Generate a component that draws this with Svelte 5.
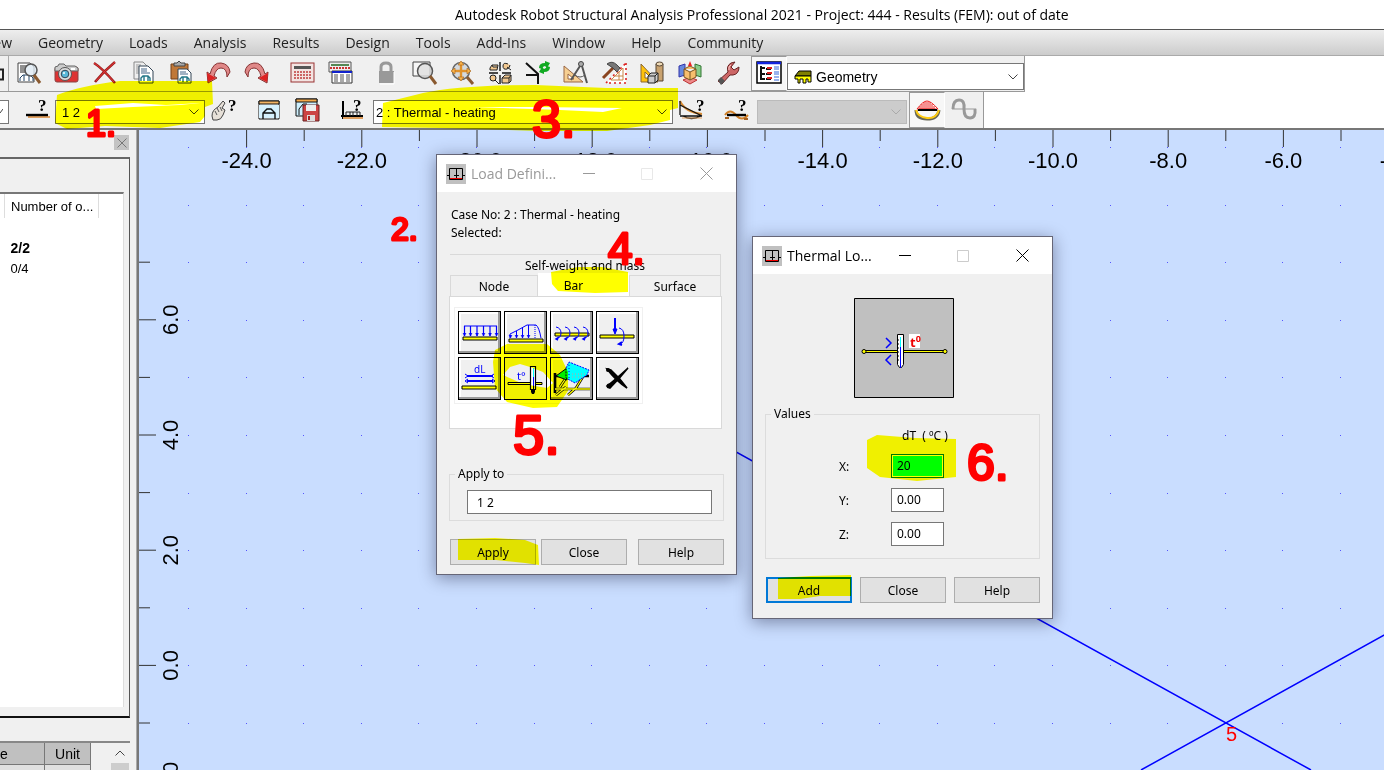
<script lang="ts">
	interface Mark {
		label: string;
		x: number;
		y: number;
		size: number;
	}

	const menus = ['Geometry', 'Loads', 'Analysis', 'Results', 'Design', 'Tools', 'Add-Ins', 'Window', 'Help', 'Community'];

	const fileTools = ['preview', 'camera', 'delete', 'copy', 'paste', 'undo', 'redo'];
	const calcTools = ['calculator', 'tables'];
	const viewTools = ['lock', 'zoom', 'pan', 'views', 'refresh', 'geometry', 'hammer', 'section', 'model', 'wrench'];
	const loadTools = ['uniform', 'trapezoid', 'moment', 'force', 'dilatation', 'thermal', 'planar', 'remove'];

	// where the question mark sits on the "select by ..." icons
	const queryX: Record<string, number> = { support: 12, hand: 17, loadcase: 14, curve: 17, buckle: 14 };

	// canvas grid, one step is one metre
	const step = 57.6;
	const originX = 50;
	const originY = 17;

	let viewWidth = $state(0);
	let viewHeight = $state(0);
	const cols = $derived(Array.from({ length: Math.max(0, Math.ceil((viewWidth - 160) / step)) }, (_, i) => i));
	const rows = $derived(Array.from({ length: Math.max(0, Math.ceil(viewHeight / step)) + 1 }, (_, i) => i));

	const marks: Mark[] = [
		{ label: '1.', x: 86, y: 136, size: 36 },
		{ label: '2.', x: 391, y: 240, size: 32 },
		{ label: '3.', x: 532, y: 137, size: 52 },
		{ label: '4.', x: 608, y: 264, size: 44 },
		{ label: '5.', x: 513, y: 454, size: 56 },
		{ label: '6.', x: 967, y: 480, size: 50 }
	];

	const highlights = [
		'M57 95 Q80 86 120 81 L212 81 L213 104 L205 107 L205 116 L200 122 L160 128 L105 126 L67 129 L55 123Z M95 106 L133 103 L166 105 L200 103 L180 105 L133 107 L96 109Z',
		'M383 103 L423 93 Q460 85 535 85 L607 88 L678 88 L678 108 L670 110 L670 120 L650 125 L607 131 L540 131 L440 128 L382 127Z M473 107 L533 107 L622 108 L603 112 L560 110 L533 109Z',
		'M551 272 L578 267 L602 267 L628 272 L628 292 L595 293 L558 291 L552 284Z',
		'M495 350 L507 344 L547 344 L560 355 L568 372 L568 391 L557 407 L533 408 L507 402 L495 388 L493 362Z M503 375 L510 367 L520 364 L530 367 L543 372 L553 383 L547 388 L523 384Z',
		'M458 539 L495 538 L525 540 L538 545 L539 565 L525 563 L496 560 L458 560Z',
		'M867 440 L877 435 L915 438 L956 439 L956 477 L917 481 L880 477 L867 468Z',
		'M778 578 L810 576 L851 575 L851 596 L820 596 L800 599 L778 599Z'
	];

	const icons: Record<string, string> = {
		preview: `<path d="M3 3h12l4 4v15H3z" fill="#fff" stroke="#444"/><path d="M5 6h8M5 8h6M5 10h6M5 12h6" stroke="#222"/><path d="M5 21v-3l3-3h7l3 3v3M9 15v6M14 15v6" fill="none" stroke="#246"/><circle cx="16" cy="10" r="6" fill="#dfeaf2" fill-opacity=".8" stroke="#555" stroke-width="1.5"/><path d="M19 15l6 8" stroke="#8a5a30" stroke-width="3"/>`,
		camera: `<rect x="2" y="7" width="23" height="15" rx="2" fill="#d33" stroke="#844"/><path d="M2 11V7l3-1 1-2h5l2 2h9l3 2v3z" fill="#ccc" stroke="#666"/><circle cx="12" cy="14" r="6.5" fill="#ddd" stroke="#555"/><circle cx="12" cy="14" r="3.8" fill="#5ab8d8" stroke="#345"/><circle cx="11" cy="13" r="1" fill="#fff"/><rect x="18" y="8" width="4" height="2" fill="#fff"/>`,
		delete: `<path d="M3 3Q11 8 24 23M24 2Q13 11 4 22" fill="none" stroke="#922" stroke-width="2.6"/><path d="M3 3Q11 8 23 22M24 2Q13 11 5 21" fill="none" stroke="#e33"/>`,
		copy: `<path d="M5 2h9l4 4v13H5z" fill="#eee" stroke="#888"/><path d="M7 5h5M7 7h8M7 9h6M7 11h8M7 13h7" stroke="#999"/><path d="M10 6h9l5 5v12H10z" fill="#fff" stroke="#345"/><path d="M12 9h6M12 11h6M12 13h9" stroke="#468"/><path d="M12 21v-3l2-2h5l2 2v3M15 16v5M19 16v5" fill="none" stroke="#278" stroke-width="1.4"/>`,
		paste: `<path d="M4 4h17v15H4z" fill="#c07838" stroke="#754018"/><path d="M7 6V3h3l2-2 2 2h4v3z" fill="#aaa" stroke="#444"/><path d="M11 9h9l4 4v10H11z" fill="#fff" stroke="#345"/><path d="M13 12h6M13 14h8" stroke="#468"/><path d="M13 21v-2l2-2h5l2 2v2M16 17v5M20 17v5" fill="none" stroke="#278" stroke-width="1.4"/>`,
		undo: `<path d="M3 23l-1-11 3 2Q8 2 16 3Q24 4 25 12L22 17Q22 8 16 8Q11 8 9 16L12 18Z" fill="#e08888" stroke="#833"/><path d="M3 22l-1-9 9 5Z" fill="#d22"/>`,
		redo: `<path d="M24 23l1-11-3 2Q19 2 11 3Q3 4 2 12L5 17Q5 8 11 8Q16 8 18 16L15 18Z" fill="#e08888" stroke="#833"/><path d="M24 22l1-9-9 5Z" fill="#d22"/>`,
		calculator: `<rect x="2" y="3" width="23" height="19" fill="#f3e4e2" stroke="#933"/><rect x="5" y="6" width="17" height="3" fill="#555"/><path d="M5 12h17M5 15h17M5 18h17" stroke="#c66" stroke-width="2" stroke-dasharray="2 1"/>`,
		tables: `<path d="M2 2h22v10H2z" fill="#eee" stroke="#555"/><path d="M4 5h18" stroke="#585" stroke-width="2"/><path d="M3 8h20" stroke="#c33" stroke-width="2" stroke-dasharray="2 1"/><path d="M5 11h20v12H5z" fill="#fff" stroke="#333"/><path d="M5 12h20" stroke="#12c" stroke-width="2"/><path d="M7 15h16M7 17h16M7 19h16M7 21h16" stroke="#555" stroke-dasharray="4 2"/>`,
		lock: `<path d="M8 12V7Q8 3 13 3T18 7V12" fill="none" stroke="#999" stroke-width="3"/><path d="M6 11h15v12H6z" fill="#999"/><path d="M21 12v12H7" fill="none" stroke="#fff"/>`,
		zoom: `<path d="M2 2h17v14H2z" fill="#f7f7f7" stroke="#444"/><circle cx="14" cy="11" r="7.5" fill="#ddd" fill-opacity=".8" stroke="#555" stroke-width="1.5"/><path d="M19 16l6 8" stroke="#8a5a30" stroke-width="3"/>`,
		pan: `<circle cx="12" cy="11" r="8.5" fill="#d4dae0" stroke="#666" stroke-width="1.5"/><path d="M12 3v16M4 11h16" stroke="#e0922c" stroke-width="2.4"/><path d="M12 1l3 4H9zM12 21l3-4H9zM2 11l4-3v6zM22 11l-4-3v6z" fill="#fbb54c" stroke="#a86010" stroke-width=".6"/><path d="M18 17l6 7" stroke="#8a5a30" stroke-width="3"/>`,
		views: `<path d="M13 2v9M13 15v9M2 13h9M15 13h9" stroke="#111" stroke-width="1.4"/><path d="M3 8l2-3h6l-1 5H3zM5 5l1 2h4" fill="#f2c890" stroke="#222"/><path d="M21 4q-5-2-5 2t4 3q3-1 3-4M20 7l4 3" fill="#f2c890" stroke="#222"/><circle cx="6" cy="18" r="3" fill="#f2c890" stroke="#222"/><path d="M8 20l4 4M15 18l3-3h6v6l-2 2h-7zM15 18h7v5M22 18l2-3" fill="#f2c890" stroke="#222"/>`,
		refresh: `<path d="M1 3l12 11v10M13 15H1" fill="none" stroke="#111" stroke-width="2"/><path d="M14 8q0-5 6-5V1l5 2-3 5-2-2q-2 0-3 3z" fill="#1a2"/><path d="M25 7q0 5-6 5v2l-5-2 3-5 2 2q2 0 3-3z" fill="#1a2"/>`,
		geometry: `<path d="M1 6v16h19z" fill="#f6cf92" stroke="#964"/><path d="M5 14v5h6z" fill="#fff" stroke="#964"/><circle cx="18" cy="4" r="2.5" fill="#aaa" stroke="#444"/><path d="M17 6L8 20M19 6l5 17" stroke="#555" stroke-width="2"/><path d="M12 15q5 4 10 0" fill="none" stroke="#555"/>`,
		hammer: `<path d="M25 3v20H5z" fill="#fff" stroke="#d22" stroke-width="1.6" stroke-dasharray="2 3"/><path d="M22 8v12H10zM18 12v8M14 16h8" fill="none" stroke="#c88848"/><path d="M2 18L13 7" stroke="#8a4420" stroke-width="3"/><path d="M6 4q5-4 10 1l3 3-3 4-4-4q-3-2-6-4z" fill="#777" stroke="#444"/>`,
		section: `<path d="M2 4v18h17z" fill="#ffc20c" stroke="#863"/><path d="M6 12v6h6z" fill="#fff" stroke="#863"/><path d="M17 4h7v17h-7z" fill="#c9a26f" stroke="#543"/><ellipse cx="20.5" cy="4" rx="3.5" ry="2" fill="#eed9b5" stroke="#543"/><path d="M9 16l3-3h7v7l-3 3H9zM9 16h7v7M16 16l3-3" fill="#ccc" stroke="#222"/>`,
		model: `<path d="M2 6l6-2v11l-6 2z" fill="#68d" stroke="#33a"/><path d="M24 6l-6-2v11l6 2z" fill="#8c8" stroke="#373"/><path d="M6 20l7-3 7 3-7 4z" fill="#e88" stroke="#b33"/><path d="M7 9l6-3 6 3v8l-6 3-6-3zM7 9l6 3 6-3M13 12v8" fill="#f7bf6d" stroke="#752"/><path d="M13 1l2 5h-4z" fill="#e22"/>`,
		wrench: `<path d="M3 21L13 12Q11 6 16 3L20 2 16 7 19 10 24 7Q24 14 18 15L15 15 7 24Z" fill="#c66" stroke="#622"/><path d="M3 20l3-3 4 4-4 4z" fill="#555"/><path d="M14 10q-1-4 2-5" stroke="#fcc" fill="none"/>`,
		layout: `<path d="M1 2h24v21H1z" fill="#fff" stroke="#000" stroke-width="1.5"/><path d="M1 3h24" stroke="#12d" stroke-width="2.5"/><path d="M5 6v13h4M5 8h4M5 14h4M10 9h5M10 14h5M10 19h5" fill="none" stroke="#111" stroke-width="2"/><path d="M11 8h5M11 13h5M11 18h5" stroke="#d22" stroke-width="2"/><path d="M18 7h5M18 9h5M18 12h5M18 14h5M18 17h5M18 20h5" stroke="#36d"/>`,
		support: `<path d="M2 20h22" stroke="#e0a060" stroke-width="2"/><path d="M0 18h22" stroke="#000" stroke-width="2.4"/>`,
		hand: `<path d="M1 19q0-6 6-9l5-6 2 2-3 5 3 2-2 5q-2 5-6 5H2z" fill="#e6e0d8" stroke="#444"/><path d="M6 11l2 4M9 10l2 4M4 14l2 4" stroke="#555"/>`,
		frame: `<path d="M3 4h20v18H3z" fill="#fff" stroke="#111"/><path d="M3 8h20v13H3z" fill="#d6f0fd"/><path d="M3 4h20v3H3z" fill="#f4b464" stroke="#111"/><path d="M7 22v-6l4-4h4l4 4v6M7 16h12" fill="none" stroke="#111" stroke-width="1.4"/>`,
		save: `<path d="M2 2h21v17H2z" fill="#cdeffd" stroke="#111"/><path d="M2 2h21v3H2z" fill="#f4aa4c" stroke="#111"/><path d="M5 18v-6l4-5h4" fill="none" stroke="#111"/><path d="M9 8h16v16H9z" fill="#c44" stroke="#622"/><path d="M12 8h10v6H12z" fill="#eee"/><path d="M13 18h8v6h-8z" fill="#ddd"/><path d="M15 19v4" stroke="#a22" stroke-width="2"/>`,
		loadcase: `<path d="M4 4v18M2 19h22" stroke="#000" stroke-width="2" fill="none"/><path d="M7 19v-4h14v4M11 15v4M14 15v4M18 15v4" fill="none" stroke="#222"/><path d="M4 21h20" stroke="#e0a060" stroke-width="2"/>`,
		curve: `<path d="M1 4q5 11 22 13" fill="none" stroke="#d98a30" stroke-width="2"/><path d="M1 4v14M1 19h22M1 8l22 11M4 19q8 5 18 0" fill="none" stroke="#111" stroke-width="1.3"/><path d="M3 21h20" stroke="#e0a060"/>`,
		buckle: `<path d="M1 18q5-7 11 0t12 0" fill="none" stroke="#d08028" stroke-width="2"/><path d="M3 18h19" stroke="#000" stroke-width="2.4"/><path d="M1 21h4M20 22h4" stroke="#a76020" stroke-width="2"/>`,
		diagram: `<path d="M2 13q0 9 11 9t12-9" fill="none" stroke="#665" stroke-width="3"/><path d="M2 13q2 7 11 8t12-8" fill="none" stroke="#fc1" stroke-width="2"/><path d="M3 12q6-8 10-8t11 8z" fill="#fff" stroke="#e22"/><path d="M6 9v3M8 7v5M10 5v7M12 5v7M14 5v7M16 5v7M18 7v5M20 9v3" stroke="#e22"/><path d="M4 13h19" stroke="#000" stroke-width="2"/>`,
		wave: `<path d="M1 12h24" stroke="#999"/><path d="M2 12Q2 3 8 3T13 12Q13 21 19 21T24 12" fill="none" stroke="#999" stroke-width="3"/>`,
		uniform: `<path d="M5 26h34v3H5z" fill="#ff0" stroke="#000"/><path d="M6 15h33M6.5 15v10M12.5 15v10M19 15v10M25.5 15v10M32 15v10M38.5 15v10" stroke="#00f" stroke-width="1.2"/><path d="M5 22l1.5 3 1.5-3M11 22l1.5 3 1.5-3M17.5 22l1.5 3 1.5-3M24 22l1.5 3 1.5-3M30.5 22l1.5 3 1.5-3M37 22l1.5 3 1.5-3" fill="#00f" stroke="#00f" stroke-width=".5"/>`,
		trapezoid: `<path d="M5 28h34v3H5z" fill="#ff0" stroke="#000"/><path d="M6 27v-4l8-4 9-5h9q3 2 5 13M12.5 20v7M18.5 17v10M24.5 14v13" fill="none" stroke="#00f"/><path d="M31 14v13" stroke="#00f" stroke-dasharray="1 1"/><path d="M5 24l1.5 3 1.5-3M11 24l1.5 3 1.5-3M17 24l1.5 3 1.5-3M23 24l1.5 3 1.5-3" stroke="#00f" fill="#00f" stroke-width=".5"/>`,
		moment: `<path d="M5 22h34v3H5z" fill="#ff0" stroke="#000"/><path d="M6 16q5 1 5 6t-5 6M15 16q5 1 5 6t-5 6M24 16q5 1 5 6t-5 6M33 16q5 1 5 6t-5 6" fill="none" stroke="#00f"/><path d="M9 26l-3 2 2 1M18 26l-3 2 2 1M27 26l-3 2 2 1M36 26l-3 2 2 1" fill="none" stroke="#00f" stroke-width="1.5"/>`,
		force: `<path d="M4 24h34v3H4z" fill="#ff0" stroke="#000"/><path d="M19 7v13" stroke="#00f" stroke-width="2"/><path d="M17 18h4l-2 5z" fill="#00f" stroke="#00f"/><path d="M23 17q5 1 5 8t-4 8" fill="none" stroke="#00f"/><path d="M26 31l-3 2 3 1" fill="none" stroke="#00f" stroke-width="2"/>`,
		dilatation: `<path d="M4 29h34v3H4z" fill="#ff0" stroke="#000"/><path d="M9 19h26M9 24h26" stroke="#00f" stroke-width="2"/><path d="M7 17l3 2-3 2M36 17l-3 2 3 2M10 22l-3 2 3 2M34 22l3 2-3 2" fill="none" stroke="#00f"/><text x="16" y="16" font-size="10" fill="#00f">dL</text>`,
		thermal: `<path d="M4 25.5h34v2H4z" fill="#ff0" stroke="#000"/><path d="M26.5 9.5h5v23h-5z" fill="#fff" stroke="#000" stroke-width="1.2"/><path d="M29.5 11v9" stroke="#0ff"/><path d="M29.5 20v12" stroke="#00f"/><path d="M27 33h4v2l-1 2h-2l-1-2z" fill="#000"/><text x="13" y="23" font-size="11" fill="#00f">t°</text>`,
		planar: `<path d="M4 32h36M5 16v20M10 30l6-9M6 38l10-8M26 31l8-13M18 38l8-7M5 19h34" stroke="#000" stroke-width="2.6"/><path d="M5 32h35M10 30l6-9M6 38l10-8M26 31l8-13M18 38l8-7" stroke="#ff0" stroke-width="1.3"/><path d="M6 19l11-8v12z" fill="#0e0" stroke="#000"/><path d="M16 11l3-6 20 8-2 5-12 8-9-5z" fill="#0ff" stroke="#00f" stroke-dasharray="2 1"/><path d="M19 8v14" stroke="#00f" stroke-dasharray="1 2"/><path d="M22 17h14M22 20h12" stroke="#c99" stroke-dasharray="1 2"/>`,
		remove: `<path d="M11 12L15 13Q24 21 31 31Q20 24 11 12Z" stroke="#000" stroke-width="1.5"/><path d="M32 11Q24 21 14 31L11 29Q20 22 32 11Z" stroke="#000" stroke-width="1.5"/><circle cx="12" cy="13" r="2"/><circle cx="13" cy="29" r="2.5"/>`
	};

	let selection = $state('1 2');
	let applyTo = $state(' 1 2');
	let tab = $state('Bar');
	let tool = $state('thermal');
	let dx = $state('20');
	let dy = $state('0.00');
	let dz = $state('0.00');
</script>

{#snippet toolButton(name: string, pressed = false)}
	<button class="tool" class:pressed aria-label={name}>
		<svg width="26" height="26" viewBox="0 0 26 26">
			{@html icons[name]}
			{#if queryX[name]}<text class="query" x={queryX[name]} y="14">?</text>{/if}
		</svg>
	</button>
{/snippet}

{#snippet chevron()}
	<svg class="chevron" width="10" height="6" viewBox="0 0 10 6"><path d="M0.5 0.5L5 5L9.5 0.5" /></svg>
{/snippet}

{#snippet titleBar(title: string)}
	<header class="title-bar">
		<svg width="20" height="20" viewBox="0 0 20 20">
			<path fill="#c0c0c0" d="M0 0h20v20H0z" />
			<path fill="none" stroke="#000" d="M3.5 4.5h13v11h-13zM10.5 4v11M1 11.5h3M8 11.5h5M16 11.5h3" />
			<path stroke="#e00" d="M4 14.5h12" />
		</svg>
		<h2>{title}</h2>
		<div class="window-buttons">
			<button aria-label="Minimize"><svg width="12" height="12"><path d="M0 5.5h12" /></svg></button>
			<button aria-label="Maximize" disabled><svg width="12" height="12"><path d="M0.5 0.5h11v11h-11z" /></svg></button>
			<button aria-label="Close window"><svg width="13" height="13"><path d="M0.5 0.5l12 12M12.5 0.5l-12 12" /></svg></button>
		</div>
	</header>
{/snippet}

<div class="app">
	<h1>Autodesk Robot Structural Analysis Professional 2021 - Project: 444 - Results (FEM): out of date</h1>

	<nav class="menu">
		<button>ew</button>
		{#each menus as menu}
			<button>{menu}</button>
		{/each}
	</nav>

	<div class="toolbar main-bar">
		<div class="group">
			<button class="stub" aria-label="Print"><svg width="4" height="16"><path d="M0 3.5h3v10h-3" /></svg></button>
			{#each fileTools as name}{@render toolButton(name)}{/each}
		</div>
		<div class="group">
			{#each calcTools as name}{@render toolButton(name)}{/each}
		</div>
		<div class="group">
			{#each viewTools as name}{@render toolButton(name)}{/each}
		</div>
		<div class="group layout-group">
			{@render toolButton('layout', true)}
			<div class="combo layout-combo">
				<svg width="18" height="14" viewBox="0 0 18 14">
					<path d="M1 6l4-5h12v5z" fill="#808000" stroke="#000" />
					<path d="M1 6h16v6h-3V9h-2v4H9V9H6v4H4V9H1z" fill="#ff0" stroke="#000" />
				</svg>
				<select aria-label="Layout"><option>Geometry</option></select>
				{@render chevron()}
			</div>
		</div>
	</div>

	<div class="toolbar select-bar">
		<div class="combo combo-stub"><svg width="3" height="6"><path d="M0 4L3 0" /></svg></div>
		{@render toolButton('support')}
		<div class="combo bar-combo">
			<select aria-label="Bar selection" bind:value={selection}><option>1 2</option></select>
			{@render chevron()}
		</div>
		{@render toolButton('hand')}
		<div class="group">
			{@render toolButton('frame')}
			{@render toolButton('save')}
		</div>
		<div class="group">{@render toolButton('loadcase')}</div>
		<div class="combo case-combo">
			<select aria-label="Load case"><option>2 : Thermal - heating</option></select>
			{@render chevron()}
		</div>
		{@render toolButton('curve')}
		<div class="group">{@render toolButton('buckle')}</div>
		<div class="combo mode-combo">
			<select aria-label="Mode" disabled><option></option></select>
			{@render chevron()}
		</div>
		{@render toolButton('diagram', true)}
		{@render toolButton('wave')}
	</div>

	<main class="workspace" bind:clientWidth={viewWidth} bind:clientHeight={viewHeight}>
		<aside>
			<div class="panel-head">
				<button class="panel-close" aria-label="Close panel">
					<svg width="10" height="10"><path d="M0.5 0.5l9 9M9.5 0.5l-9 9" /></svg>
				</button>
			</div>
			<div class="inspector">
				<div class="object-list">
					<table>
						<thead><tr><th>Number of o...</th></tr></thead>
						<tbody>
							<tr class="total"><td>2/2</td></tr>
							<tr><td>0/4</td></tr>
						</tbody>
					</table>
				</div>
			</div>
			<div class="properties">
				<table>
					<thead><tr><th class="name">e</th><th class="unit">Unit</th></tr></thead>
					<tbody><tr><td></td><td></td></tr></tbody>
				</table>
				<div class="scrollbar">
					<svg width="10" height="6"><path d="M0.5 5.5L5 1L9.5 5.5" /></svg>
					<div class="thumb"></div>
				</div>
			</div>
		</aside>

		<svg class="canvas" width="100%" height="100%">
			{#each cols as col}
				{@const x = originX + col * step}
				{#each rows as row}
					<rect class="dot" x={Math.round(x - 1)} y={Math.round(originY + row * step)} width="1" height="1" />
				{/each}
				{#if col > 0}
					<line x1={x} x2={x} y1="0" y2={col % 2 ? 17 : 11} />
				{/if}
				{#if col % 2}
					<text class="axis" {x} y="38">{(col - 25).toFixed(1)}</text>
				{/if}
			{/each}
			{#each rows.slice(2) as row}
				{@const y = originY + row * step}
				<line x1="0" x2={row % 2 ? 17 : 11} y1={y} y2={y} />
				{#if row % 2}
					<text class="axis" transform="translate(39 {y}) rotate(-90)">{(9 - row).toFixed(1)}</text>
				{/if}
			{/each}
			<path class="bar" d="M400 213L1172 640M1002 640L1420 408" />
			<text class="node" x="1087" y="611">5</text>
		</svg>
	</main>

	<section class="dialog load-dialog">
		{@render titleBar('Load Defini...')}
		<div class="dialog-body">
			<p>Case No: 2 : Thermal - heating</p>
			<p>Selected:</p>

			<div class="tabs" role="tablist">
				<button class="mass" role="tab" aria-selected={tab === 'Mass'} onclick={() => (tab = 'Mass')}>Self-weight and mass</button>
				{#each ['Node', 'Bar', 'Surface'] as name}
					<button role="tab" class:active={tab === name} aria-selected={tab === name} onclick={() => (tab = name)}>{name}</button>
				{/each}
			</div>
			<div class="tab-page">
				<div class="load-tools">
					{#each loadTools as name}
						<button class="load" class:chosen={tool === name} aria-label={name} onclick={() => (tool = name)}>
							<svg width="43" height="43" viewBox="0 0 43 43">{@html icons[name]}</svg>
						</button>
					{/each}
				</div>
			</div>

			<fieldset class="apply-to">
				<legend>Apply to</legend>
				<input aria-label="Apply to" bind:value={applyTo} />
			</fieldset>

			<div class="actions">
				<button>Apply</button>
				<button>Close</button>
				<button>Help</button>
			</div>
		</div>
	</section>

	<section class="dialog thermal-dialog">
		{@render titleBar('Thermal Lo...')}
		<div class="dialog-body">
			<svg class="picture" width="100" height="100" viewBox="0 0 100 100">
				<path d="M0.5 0.5h99v99h-99z" fill="#c0c0c0" stroke="#000" />
				<path d="M10 52.5h81v2h-81z" fill="#ff0" stroke="#000" />
				<circle cx="10" cy="53.5" r="2" fill="#ff0" stroke="#000" />
				<circle cx="91" cy="53.5" r="2" fill="#ff0" stroke="#000" />
				<path d="M43.5 36.5h6v30l-2 3h-2l-2-3z" fill="#fff" stroke="#000" />
				<path d="M44 42h1M44 46h1M44 50h1M44 54h1M44 58h1M44 62h1" stroke="#000" />
				<path d="M46.5 39v10" stroke="#0ff" />
				<path d="M46.5 49v21" stroke="#00f" />
				<path d="M32 40l5 5-5 5M37 57l-5 5 5 5" fill="none" stroke="#00f" stroke-width="1.5" />
				<path d="M55 36h11v14H55z" fill="#fff" />
				<text x="56" y="49">t<tspan class="degree" dy="-5">0</tspan></text>
			</svg>

			<fieldset class="values">
				<legend>Values</legend>
				<span class="unit-label">dT&nbsp; ( ºC )</span>
				<label for="dx">X:</label>
				<input id="dx" class="current" bind:value={dx} />
				<label for="dy">Y:</label>
				<input id="dy" bind:value={dy} />
				<label for="dz">Z:</label>
				<input id="dz" bind:value={dz} />
			</fieldset>

			<div class="actions">
				<button class="default">Add</button>
				<button>Close</button>
				<button>Help</button>
			</div>
		</div>
	</section>

	<svg class="overlay highlighter" aria-hidden="true">
		{#each highlights as d}
			<path {d} />
		{/each}
	</svg>
	<svg class="overlay steps">
		{#each marks as mark}
			<text x={mark.x} y={mark.y} font-size={mark.size}>{mark.label}</text>
		{/each}
	</svg>
</div>

<style>
	:global(body) {
		margin: 0;
		background: #fff;
	}

	.app {
		--ui: 'Open Sans', 'Noto Sans', sans-serif;
		--dialog: 'Noto Sans', sans-serif;
		--arial: 'Liberation Sans', sans-serif;
		position: relative;
		display: flex;
		flex-direction: column;
		height: 100vh;
		overflow: hidden;
		font-family: var(--ui);
		color: #000;
	}

	button,
	input,
	select {
		box-sizing: border-box;
		margin: 0;
		padding: 0;
		border: 0;
		background: none;
		font: inherit;
		color: inherit;
	}

	svg {
		display: block;
	}

	h1 {
		margin: 0;
		padding-left: 455px;
		font-size: 14px;
		font-weight: 400;
		line-height: 29px;
		white-space: nowrap;
	}

	.menu {
		display: flex;
		gap: 26px;
		box-sizing: border-box;
		height: 27px;
		flex: none;
		border-top: 1px solid #555;
		border-bottom: 1px solid #aaa;
		background: linear-gradient(#eee, #ccc);
		font-size: 14px;
		color: #222;
	}

	.menu button:first-child {
		width: 12px;
		direction: rtl;
	}

	.toolbar {
		display: flex;
		align-items: flex-end;
		box-sizing: border-box;
		height: 36px;
		flex: none;
		background: #f0f0f0;
	}

	.main-bar {
		align-self: flex-start;
		gap: 8px;
		border-right: 1px solid #999;
		border-bottom: 1px solid #999;
	}

	.select-bar {
		align-self: flex-start;
		border-right: 1px solid #999;
	}

	.group {
		display: flex;
		align-self: stretch;
		align-items: flex-end;
	}

	.layout-group {
		margin-left: -4px;
	}

	.select-bar .group {
		margin-left: 7px;
	}

	.tool {
		display: flex;
		align-items: center;
		justify-content: center;
		align-self: stretch;
		width: 38px;
		padding-bottom: 1px;
	}

	.tool svg {
		overflow: visible;
	}

	.combo-stub + .tool {
		width: 32px;
		margin-left: 14px;
	}

	.tool.pressed {
		width: 36px;
		border: 1px solid #999;
		border-right-color: #fff;
		background: #f7f7f7;
	}

	.query {
		font-family: 'Liberation Serif', serif;
		font-size: 17px;
		font-weight: 700;
	}

	.stub {
		width: 9px;
		height: 35px;
		border-right: 1px solid #aaa;
	}

	.stub path {
		fill: none;
		stroke: #222;
		stroke-width: 2;
	}

	.combo {
		display: flex;
		align-items: center;
		box-sizing: border-box;
		height: 24px;
		margin-bottom: 4px;
		padding-right: 5px;
		border: 1px solid #777;
		background: #fff;
		font-family: var(--arial);
		font-size: 13px;
	}

	.combo select {
		flex: 1;
		min-width: 0;
		height: 100%;
		padding-left: 6px;
		appearance: none;
	}

	.case-combo select {
		padding-left: 2px;
	}

	.chevron path,
	.combo-stub path,
	.scrollbar path {
		fill: none;
		stroke: #444;
	}

	.combo-stub {
		width: 9px;
		border-left: 0;
	}

	.layout-combo {
		width: 237px;
		height: 27px;
		margin-bottom: 1px;
		padding-left: 6px;
	}

	.layout-combo select {
		padding-left: 4px;
		font-size: 14px;
	}

	.bar-combo {
		width: 150px;
	}

	.case-combo {
		width: 300px;
		margin-left: 2px;
	}

	.mode-combo {
		width: 150px;
		margin: 0 2px 4px 1px;
		border-color: #bbb;
		background: #ccc;
	}

	.mode-combo path {
		stroke: #aaa;
	}

	.workspace {
		display: flex;
		flex: 1;
		min-height: 0;
		border-top: 2px solid #777;
	}

	aside {
		display: flex;
		flex-direction: column;
		box-sizing: border-box;
		width: 137px;
		flex: none;
		padding-right: 6px;
		border-right: 1px solid #aaa;
		background: #f0f0f0;
		font-family: var(--arial);
		font-size: 14px;
	}

	.panel-head {
		display: flex;
		justify-content: flex-end;
		box-sizing: border-box;
		height: 27px;
		padding: 5px 1px 0 0;
	}

	.panel-close {
		display: grid;
		place-items: center;
		width: 15px;
		height: 15px;
		background: #c3c3c3;
	}

	.panel-close path {
		stroke: #777;
	}

	.inspector {
		display: flex;
		flex: 1;
		padding: 33px 5px 9px 0;
		border-top: 2px solid #666;
		border-right: 1px solid #555;
		border-bottom: 2px solid #111;
	}

	.object-list {
		flex: 1;
		border-top: 2px solid #777;
		border-right: 1px solid #ddd;
		background: #fff;
	}

	.object-list table {
		margin-left: 4px;
		border-collapse: collapse;
	}

	.object-list th {
		width: 87px;
		height: 24px;
		padding: 0 0 0 6px;
		border: solid #ddd;
		border-width: 0 1px;
		font-size: 13px;
		font-weight: 400;
		text-align: left;
		white-space: nowrap;
	}

	.object-list td {
		height: 20px;
		padding: 0 0 0 6px;
		font-size: 13px;
	}

	.object-list .total td {
		padding-top: 20px;
		font-size: 14px;
		font-weight: 700;
	}

	.properties {
		display: flex;
		height: 27px;
		margin-top: 23px;
		border-top: 2px solid #888;
		overflow: hidden;
	}

	.properties table {
		width: 91px;
		border-collapse: collapse;
		background: #e0e0e0;
	}

	.properties th,
	.properties td {
		height: 21px;
		padding: 0;
		border-right: 1px solid #777;
		border-bottom: 1px solid #777;
		font-weight: 400;
	}

	.properties th {
		background: #c0c0c0;
	}

	.properties .name {
		width: 44px;
		text-align: left;
	}

	.scrollbar {
		display: flex;
		flex-direction: column;
		align-items: center;
		width: 20px;
		margin-left: auto;
		padding-top: 7px;
	}

	.thumb {
		width: 18px;
		flex: 1;
		margin-top: 7px;
		background: #cdcdcd;
	}

	.canvas {
		flex: 1;
		min-width: 0;
		border-left: 2px solid #777;
		background: #c9ddff;
	}

	.canvas line {
		stroke: #333;
	}

	.dot {
		fill: #55f;
	}

	.axis {
		font-family: var(--arial);
		font-size: 22px;
		text-anchor: middle;
	}

	.bar {
		fill: none;
		stroke: #00f;
		stroke-width: 1.5;
	}

	.node {
		font-family: var(--arial);
		font-size: 20px;
		fill: #f00;
	}

	.dialog {
		position: absolute;
		box-sizing: border-box;
		width: 301px;
		border: 1px solid #667;
		background: #f0f0f0;
		box-shadow: 0 3px 16px rgba(0, 0, 30, 0.4);
		font-family: var(--dialog);
		font-size: 12px;
	}

	.load-dialog {
		top: 154px;
		left: 436px;
		height: 421px;
	}

	.thermal-dialog {
		top: 236px;
		left: 752px;
		height: 383px;
	}

	.title-bar {
		display: flex;
		align-items: center;
		height: 37px;
		padding-left: 9px;
		background: #fff;
	}

	.title-bar h2 {
		flex: 1;
		margin: 0 0 0 5px;
		font-family: var(--ui);
		font-size: 14px;
		font-weight: 400;
		white-space: nowrap;
	}

	.load-dialog .title-bar {
		color: #999;
	}

	.window-buttons {
		display: flex;
	}

	.window-buttons button {
		display: grid;
		place-items: center;
		width: 58px;
		height: 37px;
	}

	.window-buttons button:last-child {
		width: 60px;
	}

	.window-buttons path {
		fill: none;
		stroke: currentColor;
	}

	.window-buttons button:disabled {
		color: #ccc;
	}

	.load-dialog .window-buttons button:disabled {
		color: #e8e8e8;
	}

	.dialog-body {
		padding: 14px 12px 0;
	}

	.dialog p {
		margin: 0 2px;
		line-height: 18px;
	}

	.tabs {
		display: grid;
		grid-template-columns: 88px 91px 92px;
		align-items: end;
		width: 271px;
		margin: 12px 0 0 1px;
	}

	.tabs button {
		height: 21px;
		border: 1px solid #d9d9d9;
		border-bottom: 0;
	}

	.tabs .mass {
		grid-column: 1 / -1;
		border-left: 0;
	}

	.tabs .active {
		height: 23px;
		margin-top: -2px;
		padding-right: 20px;
		border-color: #fff;
		background: #fff;
	}

	.tab-page {
		box-sizing: border-box;
		width: 273px;
		height: 133px;
		padding: 10px 4px;
		border: 1px solid #d9d9d9;
		background: #fff;
	}

	.load-tools {
		display: grid;
		grid-template-columns: repeat(4, 43px);
		gap: 3px;
		width: 181px;
		padding: 4px;
		outline: 1px solid #f0f0f0;
		outline-offset: -1px;
	}

	.load {
		width: 43px;
		height: 43px;
		border: 1px solid #000;
		background: #f0f0f0;
		box-shadow: inset -2px -2px #999, inset 2px 2px #fff;
	}

	.load svg {
		margin: -1px;
	}

	.load.chosen {
		box-shadow: none;
	}

	fieldset {
		box-sizing: border-box;
		min-width: 0;
		margin: 0;
		border: 1px solid #dcdcdc;
	}

	legend {
		padding: 0 3px;
		line-height: 16px;
	}

	.dialog input {
		height: 24px;
		border: 1px solid #777;
		background: #fff;
	}

	.apply-to {
		width: 275px;
		height: 55px;
		margin-top: 37px;
		padding: 8px 11px 0 5px;
	}

	.apply-to input {
		width: 245px;
		margin-left: 12px;
		padding-left: 6px;
	}

	.actions {
		display: flex;
		justify-content: space-between;
		margin: 18px 0 0 1px;
	}

	.actions button {
		width: 86px;
		height: 26px;
		border: 1px solid #adadad;
		background: #e1e1e1;
	}

	.load-dialog .actions button:nth-child(2) {
		margin: 0 6px 0 0;
	}

	.actions .default {
		border: 2px solid #0078d7;
	}

	.picture {
		margin: 10px auto 0 89px;
	}

	.picture text {
		font-size: 13px;
		font-weight: 700;
		fill: #e00;
	}

	.picture .degree {
		font-size: 9px;
	}

	.values {
		display: grid;
		grid-template-columns: 52px 53px;
		gap: 10px 0;
		align-items: center;
		align-content: start;
		height: 153px;
		margin-top: 8px;
		padding: 5px 0 0 73px;
	}

	.values legend {
		margin-left: -68px;
	}

	.unit-label {
		grid-column: 2;
		padding-left: 11px;
		line-height: 17px;
		white-space: nowrap;
	}

	.values input {
		width: 53px;
		padding: 0 5px 1px;
	}

	.values .current {
		border-color: #0078d7;
		background: #0f0;
		box-shadow: inset 0 0 0 1px #fff;
	}

	.overlay {
		position: absolute;
		inset: 0;
		width: 100%;
		height: 100%;
		pointer-events: none;
	}

	.highlighter {
		mix-blend-mode: multiply;
		fill: #ff0;
		fill-rule: evenodd;
	}

	.steps {
		fill: #f00;
		stroke: #f00;
		stroke-width: 3;
		stroke-linejoin: round;
		font-family: var(--arial);
	}
</style>
